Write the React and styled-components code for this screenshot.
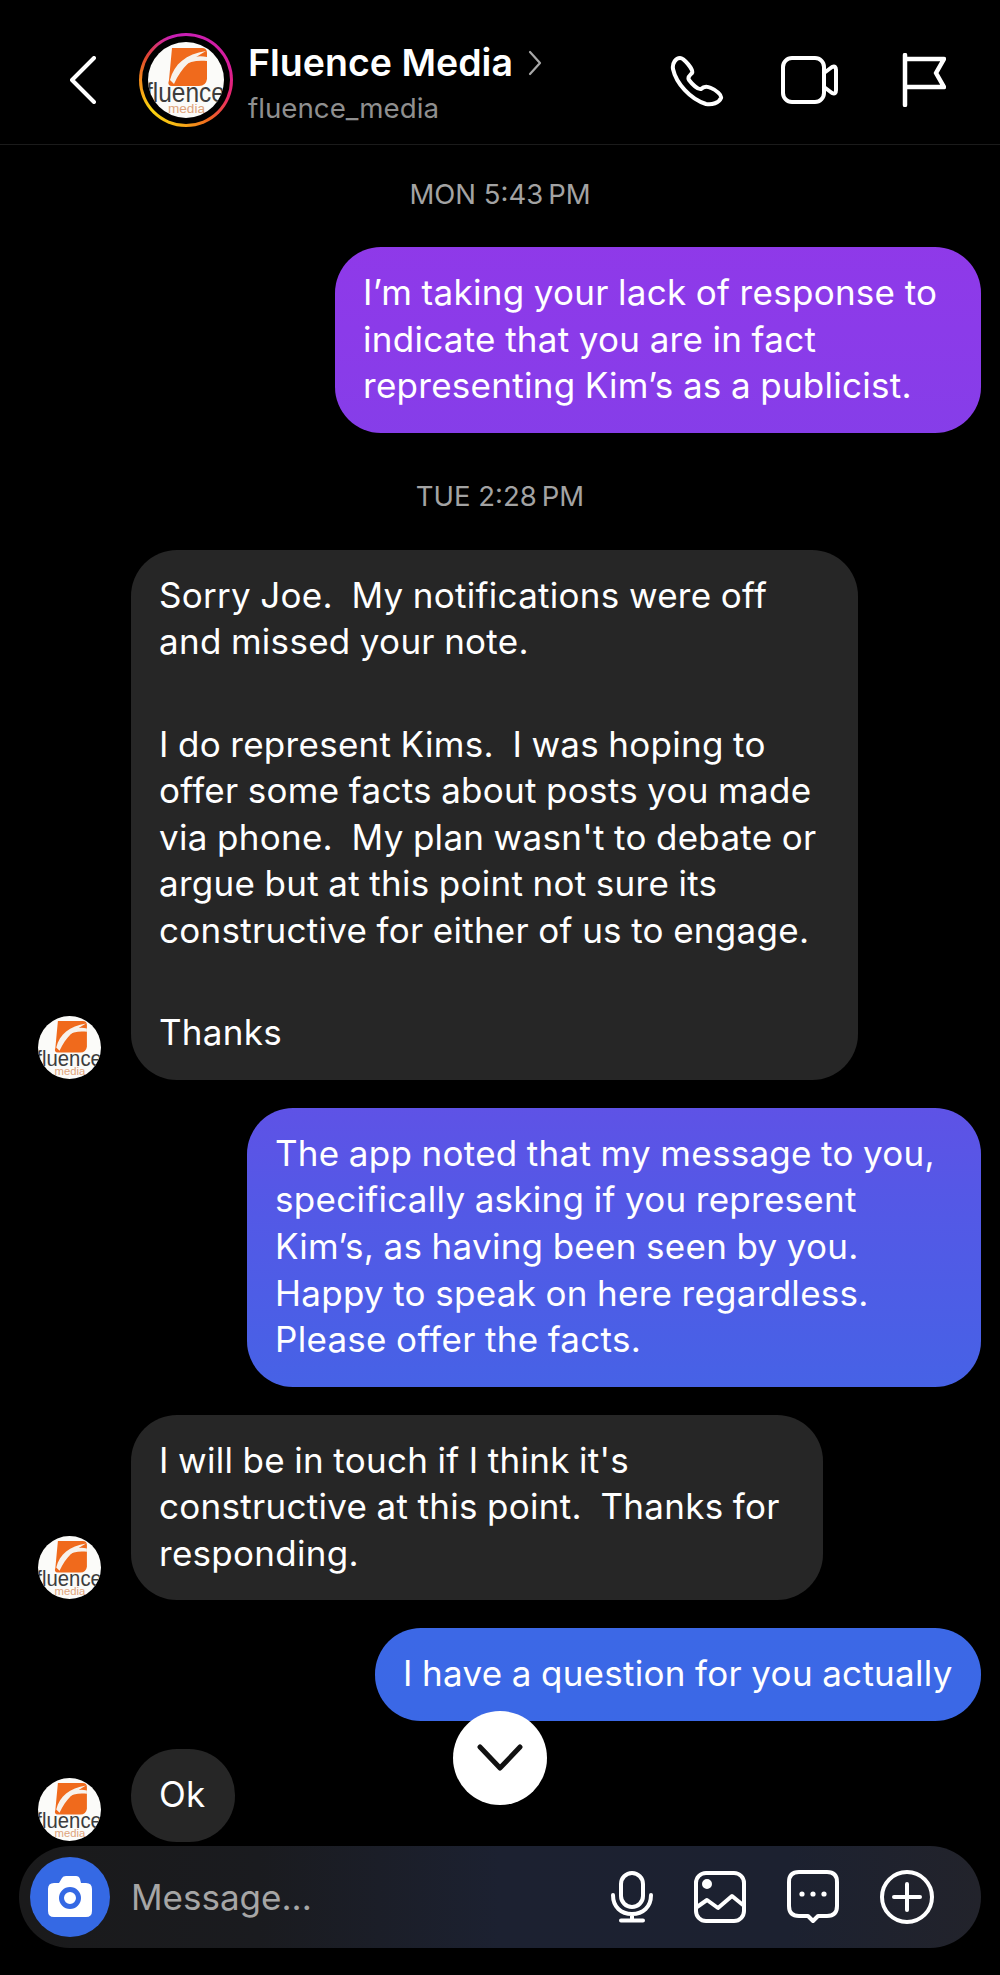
import React from 'react'
import styled, { createGlobalStyle } from 'styled-components'

const GlobalStyle = createGlobalStyle`
  html, body {
    margin: 0;
    padding: 0;
    background: #000;
    color: #fff;
    font-family: "Inter", "Liberation Sans", sans-serif;
  }
  * { box-sizing: border-box; }
`

const Page = styled.div`
  position: relative;
  width: 1000px;
  height: 1975px;
  background: #000;
  overflow: hidden;
`

const Header = styled.header`
  display: flex;
  align-items: center;
  height: 145px;
  padding: 16px 54px 0 70px;
  border-bottom: 1px solid #1b1b1b;
`

const BackIcon = styled.svg`
  width: 26px;
  height: 48px;
  margin-right: 43px;
`

const Ring = styled.div`
  flex: none;
  width: 94px;
  height: 94px;
  padding: 3px;
  border-radius: 50%;
  background: conic-gradient(from 0deg, #c91fb4 0deg, #d81c9c 70deg, #e8266b 110deg, #f0671f 150deg, #f7b515 190deg, #fbd40f 230deg, #f58a1a 270deg, #e0462e 300deg, #c91fb4 340deg);
`

const RingGap = styled.div`
  width: 88px;
  height: 88px;
  padding: 6px;
  border-radius: 50%;
  background: #000;
`

const LogoClip = styled.div`
  width: ${(p) => p.$size}px;
  height: ${(p) => p.$size}px;
  border-radius: 50%;
  overflow: hidden;
  flex: none;
  svg {
    display: block;
    width: 100%;
    height: 100%;
  }
`

const TitleBlock = styled.div`
  margin-left: 15px;
  display: flex;
  flex-direction: column;
  gap: 6px;
  margin-top: 6px;
`

const NameRow = styled.div`
  display: flex;
  align-items: center;
  gap: 15px;
`

const Name = styled.div`
  font-size: 37.5px;
  line-height: 44px;
  font-weight: 600;
  color: #fff;
`

const Handle = styled.div`
  font-size: 27.7px;
  line-height: 34px;
  color: #8f8f8f;
`

const HeaderActions = styled.div`
  margin-left: auto;
  display: flex;
  align-items: center;
  gap: 57px;
`

const Feed = styled.main`
  display: flex;
  flex-direction: column;
  padding-top: 34px;
`

const Stamp = styled.div`
  margin: 48px 0 11px;
  height: 30px;
  line-height: 30px;
  text-align: center;
  font-size: 27.5px;
  color: #a3a3a3;
  &:first-child {
    margin: 0 0 10px;
  }
`

const Row = styled.div`
  display: flex;
  align-items: flex-end;
  margin-top: 28px;
  justify-content: ${(p) => (p.$mine ? 'flex-end' : 'flex-start')};
  padding: ${(p) => (p.$mine ? '0 19px 0 0' : '0 0 0 38px')};
`

const AvatarSlot = styled.div`
  margin: 0 30px 1px 0;
`

const Bubble = styled.div`
  width: ${(p) => p.$width}px;
  padding: 22px 28px 24px;
  border-radius: 46px;
  font-size: 35px;
  letter-spacing: 0.28px;
  word-spacing: -0.8px;
  line-height: 46.6px;
  white-space: pre;
  color: #fff;
  background: ${(p) =>
    p.$mine
      ? 'linear-gradient(180deg, #9a35e8 0px, #8b3be9 330px, #6a4ce6 1000px, #5458e6 1200px, #3e68e6 1500px, #3768e6 1975px) fixed'
      : '#262626'};
`

const Gap = styled.div`
  height: 9px;
`

const DownButton = styled.div`
  position: absolute;
  left: 453px;
  top: 1711px;
  width: 94px;
  height: 94px;
  border-radius: 50%;
  background: #fff;
  display: flex;
  align-items: center;
  justify-content: center;
`

const Composer = styled.footer`
  position: absolute;
  left: 19px;
  bottom: 27px;
  width: 962px;
  height: 102px;
  border-radius: 51px;
  display: flex;
  align-items: center;
  padding: 0 47px 0 11px;
  background: linear-gradient(90deg, #1a1a1b 0%, #1a1b1f 25%, #1c2131 50%, #1c2130 80%, #22232b 100%);
`

const CameraButton = styled.div`
  flex: none;
  width: 80px;
  height: 80px;
  border-radius: 50%;
  background: #3569e4;
  display: flex;
  align-items: center;
  justify-content: center;
`

const Placeholder = styled.div`
  margin-left: 21px;
  font-size: 35px;
  color: #a6a6a6;
`

const ComposerActions = styled.div`
  margin-left: auto;
  display: flex;
  align-items: center;
  gap: 41px;
`

const Icon = styled.svg`
  display: block;
  flex: none;
  fill: none;
  stroke: ${(p) => p.$color || '#fff'};
  stroke-width: ${(p) => p.$stroke || 4}px;
  stroke-linecap: round;
  stroke-linejoin: round;
`

const Logo = ({ size }) => (
  <LogoClip $size={size}>
    <svg viewBox="0 0 76 76">
      <rect width="76" height="76" fill="#fbfbf9" />
      <path d="M24 6 H54 Q59 6 59 11 V37 Q58 44 51 44 H24 Q19 44 21 38 Z" fill="#f06a1c" />
      <path d="M22 38 C26 22 38 12 58 9 C44 17 34 24 26 42 Z" fill="#f7f2ec" />
      <path d="M34 20 C42 15 50 13 59 15 L59 19 C50 18 42 19 34 24 Z" fill="#f7f2ec" />
      <text x="-2" y="60" fontFamily="Liberation Sans, sans-serif" fontSize="27" textLength="79" lengthAdjust="spacingAndGlyphs" fill="#3d3d3d">fluence</text>
      <text x="20" y="71" fontFamily="Liberation Sans, sans-serif" fontSize="13" textLength="37" lengthAdjust="spacingAndGlyphs" fill="#dfa47c">media</text>
    </svg>
  </LogoClip>
)

const messages = [
  { stamp: 'MON 5:43\u2009PM' },
  {
    mine: true,
    width: 646,
    text: 'I’m taking your lack of response to\nindicate that you are in fact\nrepresenting Kim’s as a publicist.',
  },
  { stamp: 'TUE 2:28\u2009PM' },
  {
    width: 727,
    paragraphs: [
      'Sorry Joe.  My notifications were off\nand missed your note.\n',
      "I do represent Kims.  I was hoping to\noffer some facts about posts you made\nvia phone.  My plan wasn't to debate or\nargue but at this point not sure its\nconstructive for either of us to engage.\n",
      'Thanks',
    ],
  },
  {
    mine: true,
    width: 734,
    text: 'The app noted that my message to you,\nspecifically asking if you represent\nKim’s, as having been seen by you.\nHappy to speak on here regardless.\nPlease offer the facts.',
  },
  {
    width: 692,
    text: "I will be in touch if I think it's\nconstructive at this point.  Thanks for\nresponding.",
  },
  { mine: true, width: 606, text: 'I have a question for you actually' },
  { width: 104, text: 'Ok' },
]

export default function App() {
  return (
    <Page>
      <GlobalStyle />
      <Header>
        <BackIcon viewBox="0 0 26 48" fill="none" stroke="#fff" strokeWidth="4" strokeLinecap="round" strokeLinejoin="round">
          <path d="M24 2 L2 24 L24 46" />
        </BackIcon>
        <Ring>
          <RingGap>
            <Logo size={76} />
          </RingGap>
        </Ring>
        <TitleBlock>
          <NameRow>
            <Name>Fluence Media</Name>
            <svg width="14" height="26" viewBox="0 0 14 26" fill="none" stroke="#a8a8a8" strokeWidth="2.2" strokeLinecap="round" strokeLinejoin="round">
              <path d="M2 2 L12 13 L2 24" />
            </svg>
          </NameRow>
          <Handle>fluence_media</Handle>
        </TitleBlock>
        <HeaderActions>
          <Icon width="54" height="54" viewBox="0 0 54 54">
            <path d="M10 5 C6 5 2 10 3 16 C6 30 20 46 36 51 C42 52 49 50 51 45 C52 42 46 37 41 35 C37 33 34 33 31 36 C28 37 22 31 19 27 C17 24 20 22 22 20 C24 17 14 5 10 5 Z" />
          </Icon>
          <Icon width="64" height="50" viewBox="0 0 64 50">
            <rect x="2" y="3" width="41" height="44" rx="9" />
            <path d="M43 18 L51 12 Q55 10 55 15 V35 Q55 40 51 38 L43 32" />
          </Icon>
          <Icon width="44" height="54" viewBox="0 0 44 54" $stroke={4.5}>
            <path d="M3 2 V52 M3 6 H42 L34 20 L42 34 H3" />
          </Icon>
        </HeaderActions>
      </Header>

      <Feed>
        {messages.map((m, i) => {
          if (m.stamp) return <Stamp key={i}>{m.stamp}</Stamp>
          return (
            <Row key={i} $mine={m.mine}>
              {!m.mine && (
                <AvatarSlot>
                  <Logo size={63} />
                </AvatarSlot>
              )}
              <Bubble $mine={m.mine} $width={m.width}>
                {m.paragraphs
                  ? m.paragraphs.map((p, j) => (
                      <React.Fragment key={j}>
                        {p}
                        {j < m.paragraphs.length - 1 && (
                          <>
                            {'\n'}
                            <Gap />
                          </>
                        )}
                      </React.Fragment>
                    ))
                  : m.text}
              </Bubble>
            </Row>
          )
        })}
      </Feed>

      <DownButton>
        <Icon width="48" height="30" viewBox="0 0 48 30" $color="#111" $stroke={5}>
          <path d="M4 4 L24 25 L44 4" />
        </Icon>
      </DownButton>

      <Composer>
        <CameraButton>
          <svg width="46" height="42" viewBox="0 0 46 42">
            <path
              d="M15 2 Q16 0 19 0 H29 Q32 0 33 3 L34 7 H39 Q45 7 45 13 V35 Q45 41 39 41 H7 Q1 41 1 35 V13 Q1 7 7 7 H12 Z"
              fill="#fff"
            />
            <circle cx="23" cy="22" r="8.5" fill="#fff" stroke="#3569e4" strokeWidth="5" />
          </svg>
        </CameraButton>
        <Placeholder>Message...</Placeholder>
        <ComposerActions>
          <Icon width="42" height="52" viewBox="0 0 42 52">
            <rect x="10" y="2" width="22" height="34" rx="11" />
            <path d="M2 24 C2 36 10 43 21 43 C32 43 40 36 40 24 M21 43 V49 M10 49.5 H32" />
          </Icon>
          <Icon width="52" height="52" viewBox="0 0 52 52">
            <rect x="2" y="2" width="48" height="48" rx="10" />
            <circle cx="13" cy="13" r="3" fill="#fff" />
            <path d="M3 36 L13 29 L24 37 L38 25 L49 34" />
          </Icon>
          <Icon width="52" height="54" viewBox="0 0 52 54">
            <path d="M12 2 H40 Q50 2 50 12 V36 Q50 46 40 46 H31 L26 51 L21 46 H12 Q2 46 2 36 V12 Q2 2 12 2 Z" />
            <circle cx="15" cy="24" r="2.6" fill="#fff" stroke="none" />
            <circle cx="26" cy="24" r="2.6" fill="#fff" stroke="none" />
            <circle cx="37" cy="24" r="2.6" fill="#fff" stroke="none" />
          </Icon>
          <Icon width="54" height="54" viewBox="0 0 54 54">
            <circle cx="27" cy="27" r="25" />
            <path d="M14 27 H40 M27 14 V40" />
          </Icon>
        </ComposerActions>
      </Composer>
    </Page>
  )
}
